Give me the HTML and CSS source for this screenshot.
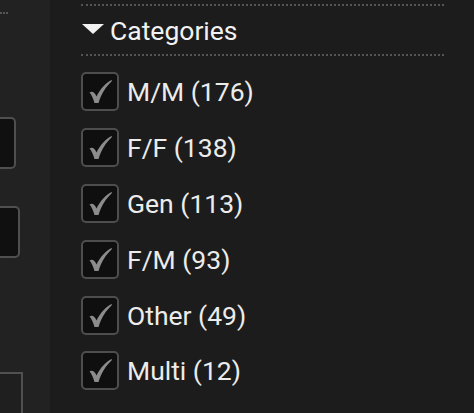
FILE: index.html
```html
<!DOCTYPE html>
<html>
<head>
<meta charset="utf-8">
<link rel="stylesheet" href="styles.css">
</head>
<body>
<div class="page">
  <aside class="side">
    <div class="side-rule"></div>
    <div class="side-box box-a"></div>
    <div class="side-box box-b"></div>
    <div class="side-box box-c"></div>
  </aside>
  <main class="main">
    <div class="section">
      <div class="heading">
        <svg class="caret" width="22" height="11" viewBox="0 0 22 11"><polygon points="0,0 22,0 11,10" fill="#f2f2f2"/></svg>
        <span>Categories</span>
      </div>
      <ul class="list">
        <li class="item"><span class="check"><svg width="38" height="39" viewBox="0 0 38 39"><path d="M8.5,20.5 C11,18.5 14,20.5 15.5,24.5 C19.5,16.5 24.5,11 30.5,8 L31,9 C25,14.5 20.5,21.5 17.5,31 L13.5,31 C12,26 10.5,22.5 8.5,20.5 Z"/></svg></span><span class="label">M/M (176)</span></li>
        <li class="item"><span class="check"><svg width="38" height="39" viewBox="0 0 38 39"><path d="M8.5,20.5 C11,18.5 14,20.5 15.5,24.5 C19.5,16.5 24.5,11 30.5,8 L31,9 C25,14.5 20.5,21.5 17.5,31 L13.5,31 C12,26 10.5,22.5 8.5,20.5 Z"/></svg></span><span class="label">F/F (138)</span></li>
        <li class="item"><span class="check"><svg width="38" height="39" viewBox="0 0 38 39"><path d="M8.5,20.5 C11,18.5 14,20.5 15.5,24.5 C19.5,16.5 24.5,11 30.5,8 L31,9 C25,14.5 20.5,21.5 17.5,31 L13.5,31 C12,26 10.5,22.5 8.5,20.5 Z"/></svg></span><span class="label">Gen (113)</span></li>
        <li class="item"><span class="check"><svg width="38" height="39" viewBox="0 0 38 39"><path d="M8.5,20.5 C11,18.5 14,20.5 15.5,24.5 C19.5,16.5 24.5,11 30.5,8 L31,9 C25,14.5 20.5,21.5 17.5,31 L13.5,31 C12,26 10.5,22.5 8.5,20.5 Z"/></svg></span><span class="label">F/M (93)</span></li>
        <li class="item"><span class="check"><svg width="38" height="39" viewBox="0 0 38 39"><path d="M8.5,20.5 C11,18.5 14,20.5 15.5,24.5 C19.5,16.5 24.5,11 30.5,8 L31,9 C25,14.5 20.5,21.5 17.5,31 L13.5,31 C12,26 10.5,22.5 8.5,20.5 Z"/></svg></span><span class="label">Other (49)</span></li>
        <li class="item"><span class="check"><svg width="38" height="39" viewBox="0 0 38 39"><path d="M8.5,20.5 C11,18.5 14,20.5 15.5,24.5 C19.5,16.5 24.5,11 30.5,8 L31,9 C25,14.5 20.5,21.5 17.5,31 L13.5,31 C12,26 10.5,22.5 8.5,20.5 Z"/></svg></span><span class="label">Multi (12)</span></li>
      </ul>
    </div>
  </main>
</div>
</body>
</html>
```

FILE: styles.css
```css
html, body {
  margin: 0;
  padding: 0;
  background: #1c1c1c;
  font-family: Roboto, "Liberation Sans", sans-serif;
  color: #ececec;
}
.page {
  display: flex;
  width: 474px;
  height: 413px;
  overflow: hidden;
}
.side {
  width: 50px;
  flex: none;
  background: #222222;
  display: flex;
  flex-direction: column;
  overflow: hidden;
}
.side-rule {
  flex: none;
  margin-top: 12px;
  width: 8px;
  border-top: 2px dotted #555;
}
.side-box {
  flex: none;
  box-sizing: border-box;
  border: 2px solid #4f4f4f;
  background: #101010;
}
.box-a {
  margin-top: 103px;
  margin-left: -30px;
  width: 46px;
  height: 52px;
  border-radius: 5px;
}
.box-b {
  margin-top: 37px;
  margin-left: -30px;
  width: 50px;
  height: 52px;
  border-radius: 5px;
}
.box-c {
  margin-top: 114px;
  margin-left: -30px;
  width: 53px;
  height: 60px;
  border-radius: 0;
  background: #1f1f1f;
  border-color: #505050;
}
.main {
  flex: 1;
  padding: 4px 30px 0 31px;
}
.section {
  border-top: 2px dotted #555;
}
.heading {
  display: flex;
  align-items: center;
  height: 48px;
  border-bottom: 2px dotted #555;
  font-size: 26.5px;
  color: #f2f2f2;
}
.caret {
  margin-left: 1px;
  margin-right: 6px;
  margin-top: -1px;
}
.list {
  list-style: none;
  margin: 0;
  padding: 8px 0 0 0;
}
.item {
  display: flex;
  align-items: center;
  height: 55.8px;
}
.check {
  flex: none;
  box-sizing: border-box;
  width: 38px;
  height: 39px;
  border: 2px solid #4e4e4e;
  border-radius: 5px;
  background: #0f0f0f;
  position: relative;
  margin-right: 8px;
}
.check svg {
  position: absolute;
  left: -2px;
  top: -2px;
  fill: #8c8c8c;
}
.label {
  font-size: 26.5px;
}
```
